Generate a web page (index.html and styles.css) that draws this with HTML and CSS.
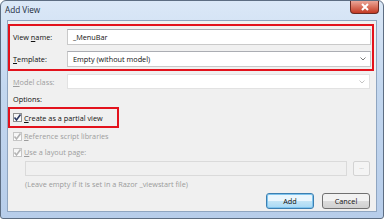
FILE: index.html
```html
<!DOCTYPE html>
<html lang="en">
<head>
    <meta charset="UTF-8">
    <title>Add View</title>
    <link rel="stylesheet" href="styles.css">
</head>
<body>
<div class="window">
    <div class="titlebar">
        <span class="title">Add View</span>
        <span class="close">
            <svg width="10" height="8" viewBox="0 0 10 8"><path d="M2 1 L8 7 M8 1 L2 7" stroke="#fff" stroke-width="2" fill="none"/></svg>
        </span>
    </div>
    <div class="client">
        <div class="mark top-fields">
            <div class="row">
                <span class="label">View <u>n</u>ame:</span>
                <div class="field">_MenuBar</div>
            </div>
            <div class="row">
                <span class="label"><u>T</u>emplate:</span>
                <div class="field select">Empty (without model)
                    <svg class="chev" width="6" height="4" viewBox="0 0 6 4"><path d="M0.5 0.5 L3 3 L5.5 0.5" stroke="#7a7a7a" fill="none"/></svg>
                </div>
            </div>
        </div>
        <div class="row model">
            <span class="label off"><u>M</u>odel class:</span>
            <div class="field select">
                <svg class="chev" width="6" height="4" viewBox="0 0 6 4"><path d="M0.5 0.5 L3 3 L5.5 0.5" stroke="#c4c4c4" fill="none"/></svg>
            </div>
        </div>
        <div class="options">Options:</div>
        <div class="mark partial">
            <span class="check">
                <svg width="9" height="9" viewBox="0 0 9 9"><path d="M1.5 4.5 L3.5 7 L7.5 1.5" stroke="#2b3a63" stroke-width="1.6" fill="none"/></svg>
            </span>
            <span><u>C</u>reate as a partial view</span>
        </div>
        <div class="check-row off">
            <span class="check">
                <svg width="9" height="9" viewBox="0 0 9 9"><path d="M1.5 4.5 L3.5 7 L7.5 1.5" stroke="#b5b5b5" stroke-width="1.6" fill="none"/></svg>
            </span>
            <span><u>R</u>eference script libraries</span>
        </div>
        <div class="check-row off">
            <span class="check">
                <svg width="9" height="9" viewBox="0 0 9 9"><path d="M1.5 4.5 L3.5 7 L7.5 1.5" stroke="#b5b5b5" stroke-width="1.6" fill="none"/></svg>
            </span>
            <span><u>U</u>se a layout page:</span>
        </div>
        <div class="layout-row">
            <div class="field path"></div>
            <div class="browse">...</div>
        </div>
        <div class="hint">(Leave empty if it is set in a Razor _viewstart file)</div>
        <div class="buttons">
            <button class="btn default">Add</button>
            <button class="btn">Cancel</button>
        </div>
    </div>
</div>
</body>
</html>
```

FILE: styles.css
```css
*{
    padding: 0;
    margin: 0;
    box-sizing: border-box;
}
body{
    background: #fff;
    font: 400 7.3px/12px "Open Sans", "Noto Sans", sans-serif;
    color: #111;
}
.window{
    width: 384px;
    height: 219px;
    border: 1px solid #5d6d82;
    border-radius: 6px 6px 3px 3px;
    background: linear-gradient(#dbe8f7, #c3d7ef 40%, #b7cdea);
    padding: 0 6px 6px 6px;
    display: flex;
    flex-direction: column;
}
.titlebar{
    height: 19px;
    display: flex;
    align-items: flex-start;
    justify-content: space-between;
}
.title{
    margin: 3px 0 0 -2px;
    font-size: 8.2px;
    color: #1b2a3c;
}
.close{
    width: 29px;
    height: 13px;
    margin: 0 -2px 0 0;
    border: 1px solid #6b2a22;
    border-top: none;
    border-radius: 0 0 4px 4px;
    background: linear-gradient(#eba698, #d9705c 50%, #c43a24);
    display: flex;
    align-items: center;
    justify-content: center;
}
.client{
    height: 192px;
    border: 1px solid #8fa5c0;
    background: #f0f0f0;
    padding: 3px 2px 0 0;
    display: flex;
    flex-direction: column;
}
.mark{
    border: 2px solid #e3121c;
}
.top-fields{
    padding: 3px 1px 2px 3px;
    display: flex;
    flex-direction: column;
    gap: 6px;
}
.row{
    display: flex;
    align-items: center;
}
.label{
    width: 54px;
    flex: none;
}
.off{
    color: #9d9d9d;
}
.field{
    flex: 1;
    height: 16px;
    border: 1px solid #c9c9c9;
    border-top-color: #abadb3;
    background: #fff;
    padding: 0 5px;
    line-height: 14px;
    display: flex;
    align-items: center;
}
.select{
    justify-content: space-between;
    padding-right: 4px;
}
.chev{
    margin-left: auto;
}
.model{
    margin: 3px 4px 0 5px;
}
.model .field{
    height: 15px;
    border-color: #e2e2e2;
}
.options{
    margin: 4px 0 0 5px;
}
.partial{
    align-self: flex-start;
    margin-top: 2px;
    height: 21px;
    padding: 0 14px 0 3px;
    display: flex;
    align-items: center;
    gap: 2px;
}
.check{
    width: 9px;
    height: 9px;
    border: 1px solid #8f8f8f;
    background: linear-gradient(#f4f4f4, #fff);
    display: flex;
    align-items: center;
    justify-content: center;
    flex: none;
}
.check svg{
    flex: none;
}
.check-row{
    margin: 0 0 0 5px;
    height: 16px;
    display: flex;
    align-items: center;
    gap: 2px;
}
.check-row .check{
    border-color: #c5c5c5;
}
.layout-row{
    margin: 0 4px 0 17px;
    display: flex;
    align-items: center;
    gap: 6px;
}
.path{
    height: 15px;
    background: #f0f0f0;
    border-color: #dadada;
}
.browse{
    width: 17px;
    height: 15px;
    margin-top: 1px;
    border: 1px solid #d3d3d3;
    border-radius: 2px;
    background: #f4f4f4;
    color: #a8a8a8;
    font-size: 6px;
    line-height: 11px;
    text-align: center;
}
.hint{
    margin: 2px 0 0 17px;
    color: #9a9a9a;
}
.buttons{
    margin: auto 4px 2px 0;
    display: flex;
    justify-content: flex-end;
    gap: 8px;
}
.btn{
    width: 48px;
    height: 16px;
    font: inherit;
    color: #111;
    border: 1px solid #707070;
    border-radius: 3px;
    background: linear-gradient(#f2f2f2 50%, #dcdcdc 50%, #d0d0d0);
}
.default{
    border-color: #3c7fb1;
    background: linear-gradient(#eaf6fd 50%, #c4e5f6 50%, #a7d9f5);
    box-shadow: inset 0 0 0 1px #7fc4ee;
}
```
